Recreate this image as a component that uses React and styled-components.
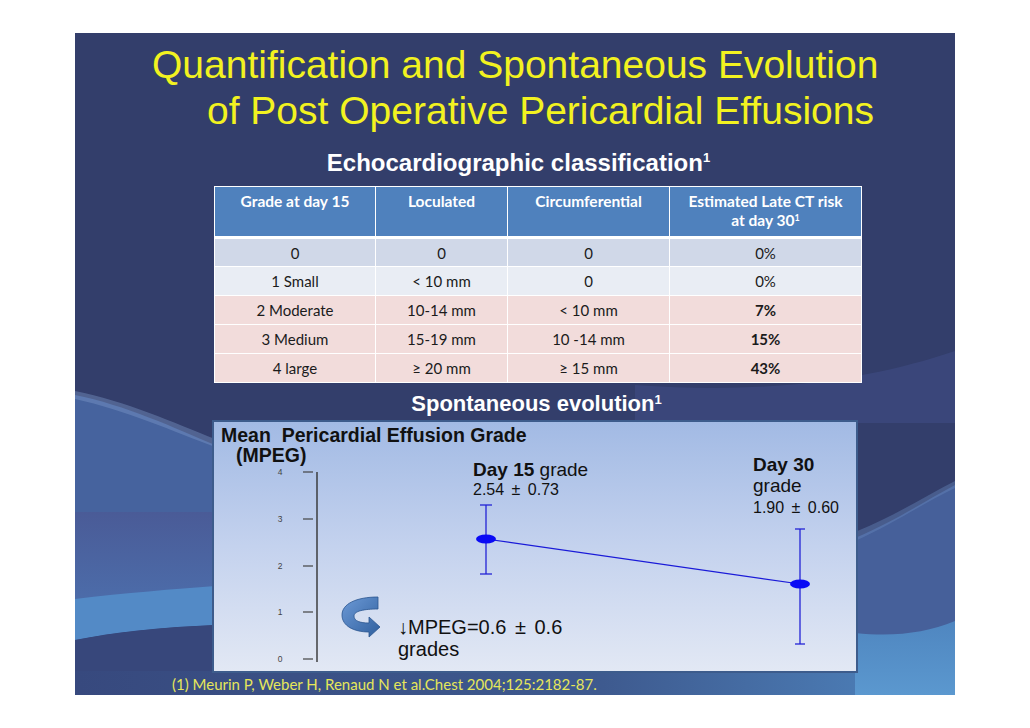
import React from "react";
import styled, { createGlobalStyle } from "styled-components";

const GlobalStyle = createGlobalStyle`
  html, body { margin: 0; padding: 0; background: #fff; }
  body { font-family: "Liberation Sans", Arial, sans-serif; }
`;

const SANS = `"Liberation Sans", Arial, sans-serif`;
const CALIBRI = `Lato, "Open Sans", sans-serif`;

const Page = styled.div`
  width: 1030px;
  height: 728px;
  padding: 33px 0 0 75px;
  box-sizing: border-box;
`;

const Slide = styled.div`
  position: relative;
  width: 880px;
  height: 662px;
  overflow: hidden;
  background: #333e6b;
`;

const Backdrop = styled.svg`
  position: absolute;
  inset: 0;
`;

const Content = styled.div`
  position: relative;
  display: flex;
  flex-direction: column;
  align-items: flex-start;
`;

const Title = styled.h1`
  margin: 9px 0 0;
  font: 400 39px/46px ${SANS};
  color: #f2f220;
`;

const TitleLine = styled.span`
  display: block;
  padding-left: ${(p) => p.$indent}px;
  white-space: nowrap;
`;

const Heading = styled.h2`
  margin: ${(p) => p.$top}px 0 0 ${(p) => p.$left}px;
  width: 647px;
  text-align: center;
  font: 700 ${(p) => p.$size}px/${(p) => p.$size + 4}px ${SANS};
  color: #fff;
  white-space: nowrap;
  sup {
    font-size: 13px;
    line-height: 1;
    vertical-align: top;
    position: relative;
    top: 2px;
  }
`;

const Table = styled.table`
  margin: 9px 0 0 139px;
  width: 647px;
  border-collapse: collapse;
  table-layout: fixed;
  border: 1px solid #fff;
  font-family: ${CALIBRI};
`;

const HeadCell = styled.th`
  width: ${(p) => p.$w}px;
  height: 51px;
  box-sizing: border-box;
  padding: 5px 4px 0;
  vertical-align: top;
  background: #4f81bd;
  color: #fff;
  font-weight: 700;
  font-size: 15.5px;
  line-height: 19px;
  border-left: 1px solid #fff;
  border-bottom: 3px solid #fff;
  white-space: nowrap;
  sup {
    font-size: 9px;
    vertical-align: top;
    line-height: 1;
    position: relative;
    top: 2px;
  }
`;

const Row = styled.tr`
  background: ${(p) => p.$bg};
`;

const Cell = styled.td`
  height: 29px;
  box-sizing: border-box;
  padding: 0 4px;
  text-align: center;
  font-size: 15px;
  color: #1b1b1b;
  font-weight: ${(p) => (p.$bold ? 700 : 400)};
  border-left: 1px solid #fff;
  border-top: 1px solid #fff;
`;

const ChartPanel = styled.div`
  position: relative;
  margin: 3px 0 0 137px;
  width: 646px;
  height: 253px;
  box-sizing: border-box;
  border: 2px solid #3d5c8c;
  background: linear-gradient(180deg, #a2bae4 0%, #c4d2ee 50%, #e2e8f4 100%);
`;

const ChartCanvas = styled.svg`
  position: absolute;
  inset: 0;
`;

const PanelHeading = styled.div`
  position: relative;
  padding: 3px 0 0 7px;
  font: 700 19.5px/20px ${SANS};
  color: #111;
  white-space: pre;
`;

const HeadingIndent = styled.span`
  display: block;
  padding-left: 15px;
`;

const Footnote = styled.p`
  margin: 2px 0 0 97px;
  font: 400 15px/18px ${CALIBRI};
  color: #e6e65a;
  white-space: nowrap;
`;

const rows = [
  { bg: "#d0d8e8", cells: ["0", "0", "0", "0%"], bold: false },
  { bg: "#e9edf4", cells: ["1 Small", "< 10 mm", "0", "0%"], bold: false },
  { bg: "#f2dcdb", cells: ["2 Moderate", "10-14 mm", "< 10 mm", "7%"], bold: true },
  { bg: "#f2dcdb", cells: ["3 Medium", "15-19 mm", "10 -14 mm", "15%"], bold: true },
  { bg: "#f2dcdb", cells: ["4 large", "\u2265 20 mm", "\u2265 15 mm", "43%"], bold: true },
];

const ticks = [
  { v: "4", y: 50 },
  { v: "3", y: 97 },
  { v: "2", y: 144 },
  { v: "1", y: 190 },
  { v: "0", y: 237 },
];

const BackgroundArt = () => (
  <Backdrop width="880" height="662" viewBox="0 0 880 662">
    <defs>
      <linearGradient id="lowLeft" x1="0" y1="0" x2="0" y2="1">
        <stop offset="0" stopColor="#4a5b97" />
        <stop offset="1" stopColor="#4d74b2" />
      </linearGradient>
      <linearGradient id="floor" x1="0" y1="0" x2="1" y2="0">
        <stop offset="0" stopColor="#37497e" />
        <stop offset="0.6" stopColor="#3e5a8f" />
        <stop offset="1" stopColor="#4f86c0" />
      </linearGradient>
      <linearGradient id="rightLight" x1="0" y1="0" x2="0" y2="1">
        <stop offset="0" stopColor="#4f86c0" />
        <stop offset="1" stopColor="#5b98cf" />
      </linearGradient>
    </defs>
    <path d="M560,352 C700,362 800,345 880,318 L880,390 L560,390 Z" fill="#3d4a80" opacity="0.7" />
    <path d="M0,362 C50,372 100,395 140,412 L140,480 L0,480 Z" fill="#46639e" />
    <path d="M0,358 C50,368 100,390 140,406 L140,414 C100,399 50,377 0,366 Z" fill="#7f9bcb" opacity="0.4" />
    <path d="M0,479 L140,479 L140,592 C90,594 40,599 0,607 Z" fill="url(#lowLeft)" />
    <path d="M0,566 C50,560 100,556 140,553 L140,592 C90,594 40,599 0,607 Z" fill="#538ac6" />
    <path d="M0,607 C40,599 90,594 140,592 L140,662 L0,662 Z" fill="#37477b" />
    <rect x="0" y="638" width="880" height="24" fill="url(#floor)" />
    <path d="M780,505 C820,488 850,468 880,452 L880,662 L780,662 Z" fill="#46609a" />
    <path d="M780,499 C820,483 850,463 880,448 L880,455 C850,469 820,490 780,508 Z" fill="#6a8abf" opacity="0.4" />
    <path d="M780,600 C820,604 850,600 880,588 L880,662 L780,662 Z" fill="url(#rightLight)" />
  </Backdrop>
);

const ErrorBar = ({ x, y1, y2, cap }) => (
  <g stroke="#2323d6" strokeWidth="1.3">
    <line x1={x} y1={y1} x2={x} y2={y2} />
    <line x1={x - cap} y1={y1} x2={x + cap} y2={y1} />
    <line x1={x - cap} y1={y2} x2={x + cap} y2={y2} />
  </g>
);

const Chart = () => (
  <ChartCanvas width="642" height="249" viewBox="0 0 642 249">
    <defs>
      <linearGradient id="arrowFill" x1="0" y1="0" x2="1" y2="1">
        <stop offset="0" stopColor="#6d9ad6" />
        <stop offset="1" stopColor="#2f5f9e" />
      </linearGradient>
    </defs>
    <line x1="103" y1="50" x2="103" y2="240" stroke="#333" strokeWidth="1.4" />
    {ticks.map((t) => (
      <g key={t.v}>
        <line x1="89" y1={t.y} x2="99" y2={t.y} stroke="#444" strokeWidth="1.2" />
        <text x="66" y={t.y + 3} fontSize="8.5" fill="#444" textAnchor="middle" fontFamily={SANS}>
          {t.v}
        </text>
      </g>
    ))}

    <line x1="272" y1="117" x2="586" y2="162" stroke="#1a1ad8" strokeWidth="1.2" />
    <ErrorBar x={272} y1={83} y2={152} cap={6} />
    <ErrorBar x={586} y1={107} y2={222} cap={5} />
    <ellipse cx="272" cy="117" rx="10" ry="4.5" fill="#0a0af5" />
    <ellipse cx="586" cy="162" rx="10" ry="4.5" fill="#0a0af5" />

    <g fontFamily={SANS} fill="#111">
      <text x="259" y="54" fontSize="19">
        <tspan fontWeight="700">Day 15</tspan> grade
      </text>
      <text x="259" y="73" fontSize="16" wordSpacing="3">2.54 ± 0.73</text>
      <text x="539" y="49" fontSize="19" fontWeight="700">Day 30</text>
      <text x="539" y="70" fontSize="19">grade</text>
      <text x="539" y="91" fontSize="16" wordSpacing="3">1.90 ± 0.60</text>
      <text x="184" y="212" fontSize="20" wordSpacing="3">↓MPEG=0.6 ± 0.6</text>
      <text x="184" y="234" fontSize="20">grades</text>
    </g>

    <path
      transform="translate(128 175)"
      d="M36,0 L36,12 C22,12 12,14 12,19 C12,24 18,26 27,26 L27,20 L38,30 L27,40 L27,35 C12,35 0,29 0,18 C0,7 14,0 36,0 Z"
      fill="url(#arrowFill)"
      stroke="#2b568f"
      strokeWidth="0.8"
    />
  </ChartCanvas>
);

export default function App() {
  return (
    <Page>
      <GlobalStyle />
      <Slide>
        <BackgroundArt />
        <Content>
          <Title>
            <TitleLine $indent={77}>Quantification and Spontaneous Evolution</TitleLine>
            <TitleLine $indent={132}>of Post Operative Pericardial Effusions</TitleLine>
          </Title>

          <Heading $top={15} $left={120} $size={24}>
            Echocardiographic classification<sup>1</sup>
          </Heading>

          <Table>
            <thead>
              <tr>
                <HeadCell $w={161}>Grade at day 15</HeadCell>
                <HeadCell $w={132}>Loculated</HeadCell>
                <HeadCell $w={162}>Circumferential</HeadCell>
                <HeadCell $w={192}>
                  Estimated Late CT risk
                  <br />
                  at day 30<sup>1</sup>
                </HeadCell>
              </tr>
            </thead>
            <tbody>
              {rows.map((r, i) => (
                <Row key={i} $bg={r.bg}>
                  {r.cells.map((c, j) => (
                    <Cell key={j} $bold={r.bold && j === 3}>
                      {c}
                    </Cell>
                  ))}
                </Row>
              ))}
            </tbody>
          </Table>

          <Heading $top={8} $left={138} $size={22}>
            Spontaneous evolution<sup>1</sup>
          </Heading>

          <ChartPanel>
            <Chart />
            <PanelHeading>
              {"Mean  Pericardial Effusion Grade"}
              <HeadingIndent>(MPEG)</HeadingIndent>
            </PanelHeading>
          </ChartPanel>

          <Footnote>(1) Meurin P, Weber H, Renaud N et al.Chest 2004;125:2182-87.</Footnote>
        </Content>
      </Slide>
    </Page>
  );
}
